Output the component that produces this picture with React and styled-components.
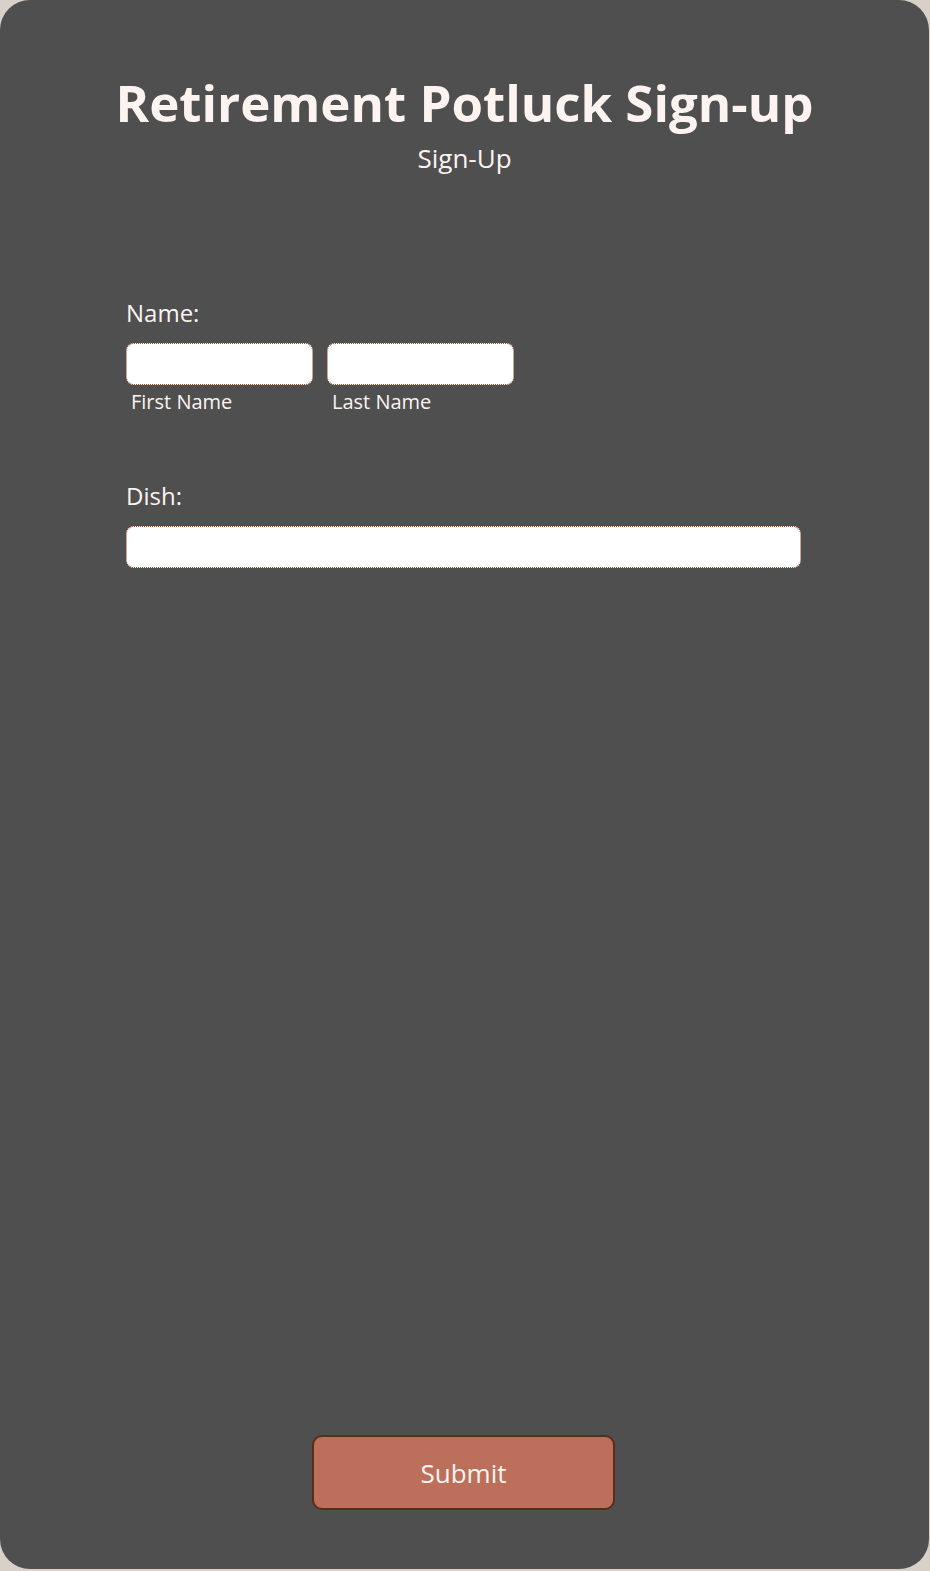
import React from "react";
import styled, { createGlobalStyle } from "styled-components";

const GlobalStyle = createGlobalStyle`
    html, body {
        margin: 0;
        padding: 0;
    }
    body {
        background: #d9d0c8;
        font-family: "Trebuchet MS", "Open Sans", "DejaVu Sans", sans-serif;
    }
    * {
        box-sizing: border-box;
    }
`

const Card = styled.div`
    width: 929px;
    min-height: 1569px;
    background: #4f4f4f;
    border-radius: 30px;
    display: flex;
    flex-direction: column;
    padding: 72px 0 59px;
    color: #fdf3f1;
`

const Header = styled.header`
    display: flex;
    flex-direction: column;
    align-items: center;
    margin-bottom: 124px;
`

const Title = styled.h1`
    margin: 0;
    font-size: 51px;
    font-weight: bold;
    line-height: 60px;
`

const Subtitle = styled.p`
    margin: 10px 0 0;
    font-size: 26px;
    line-height: 32px;
`

const Form = styled.form`
    flex: 1;
    display: flex;
    flex-direction: column;
    padding: 0 128px 0 126px;
`

const Field = styled.div`
    display: flex;
    flex-direction: column;
    margin-bottom: ${p => p.$gap || 0}px;
`

const Label = styled.label`
    font-size: 24px;
    line-height: 30px;
    margin-bottom: 15px;
`

const Row = styled.div`
    display: flex;
    gap: 14px;
`

const Part = styled.div`
    display: flex;
    flex-direction: column;
    width: 187px;
`

const Input = styled.input`
    width: ${p => p.$full ? "100%" : "187px"};
    height: 42px;
    border: 1px dotted #9a4f22;
    border-radius: 8px;
    background: #fff;
    font: inherit;
    font-size: 18px;
    padding: 0 10px;
    outline: none;
`

const SubLabel = styled.span`
    font-size: 20px;
    line-height: 24px;
    margin-top: 5px;
    padding-left: 5px;
`

const Submit = styled.button`
    align-self: center;
    margin-top: auto;
    width: 303px;
    height: 75px;
    background: #bc6f5a;
    border: 2px solid #5b2b19;
    border-radius: 10px;
    color: #fdf3f1;
    font: inherit;
    font-size: 26px;
    cursor: pointer;
`

export default function App() {
    return (
        <>
            <GlobalStyle />
            <Card>
                <Header>
                    <Title>Retirement Potluck Sign-up</Title>
                    <Subtitle>Sign-Up</Subtitle>
                </Header>
                <Form onSubmit={e => e.preventDefault()}>
                    <Field $gap={67}>
                        <Label>Name:</Label>
                        <Row>
                            <Part>
                                <Input type="text" />
                                <SubLabel>First Name</SubLabel>
                            </Part>
                            <Part>
                                <Input type="text" />
                                <SubLabel>Last Name</SubLabel>
                            </Part>
                        </Row>
                    </Field>
                    <Field>
                        <Label>Dish:</Label>
                        <Input type="text" $full />
                    </Field>
                    <Submit type="submit">Submit</Submit>
                </Form>
            </Card>
        </>
    );
}
